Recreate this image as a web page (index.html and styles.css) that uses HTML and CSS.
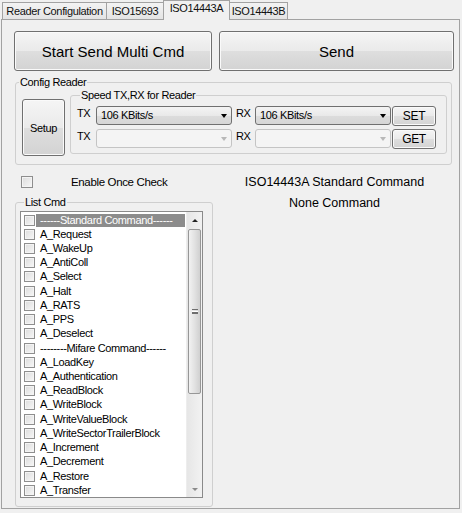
FILE: index.html
```html
<!DOCTYPE html>
<html lang="en">

<head>
    <meta charset="UTF-8">
    <title>ISO14443A</title>
    <link rel="stylesheet" href="styles.css">
</head>

<body>
    <div class="tabs">
        <div class="tab t1">Reader Configulation</div>
        <div class="tab t2">ISO15693</div>
        <div class="tab t3 active">ISO14443A</div>
        <div class="tab t4">ISO14443B</div>
    </div>
    <div class="page">
        <div class="top-btns">
            <button class="btn big start">Start Send Multi Cmd</button>
            <button class="btn big send">Send</button>
        </div>
        <fieldset class="group config">
            <legend>Config Reader</legend>
            <div class="config-row">
                <button class="btn setup">Setup</button>
                <fieldset class="group speed">
                    <legend>Speed TX,RX for Reader</legend>
                    <div class="speed-row">
                        <span class="lbl">TX</span>
                        <div class="combo">106 KBits/s<span class="arrow"></span></div>
                        <span class="lbl rx">RX</span>
                        <div class="combo">106 KBits/s<span class="arrow"></span></div>
                        <button class="btn small">SET</button>
                    </div>
                    <div class="speed-row">
                        <span class="lbl">TX</span>
                        <div class="combo disabled"><span class="arrow"></span></div>
                        <span class="lbl rx">RX</span>
                        <div class="combo disabled"><span class="arrow"></span></div>
                        <button class="btn small">GET</button>
                    </div>
                </fieldset>
            </div>
        </fieldset>
        <div class="lower">
            <div class="left-col">
                <div class="check-row">
                    <span class="chk"></span>
                    <span class="check-text">Enable Once Check</span>
                </div>
                <fieldset class="group listgrp">
                    <legend>List Cmd</legend>
                    <div class="listbox">
                        <div class="items">
                            <div class="item selected"><span class="chk"></span><span class="txt">------Standard Command------</span></div>
                            <div class="item"><span class="chk"></span><span class="txt">A_Request</span></div>
                            <div class="item"><span class="chk"></span><span class="txt">A_WakeUp</span></div>
                            <div class="item"><span class="chk"></span><span class="txt">A_AntiColl</span></div>
                            <div class="item"><span class="chk"></span><span class="txt">A_Select</span></div>
                            <div class="item"><span class="chk"></span><span class="txt">A_Halt</span></div>
                            <div class="item"><span class="chk"></span><span class="txt">A_RATS</span></div>
                            <div class="item"><span class="chk"></span><span class="txt">A_PPS</span></div>
                            <div class="item"><span class="chk"></span><span class="txt">A_Deselect</span></div>
                            <div class="item"><span class="chk"></span><span class="txt">--------Mifare Command------</span></div>
                            <div class="item"><span class="chk"></span><span class="txt">A_LoadKey</span></div>
                            <div class="item"><span class="chk"></span><span class="txt">A_Authentication</span></div>
                            <div class="item"><span class="chk"></span><span class="txt">A_ReadBlock</span></div>
                            <div class="item"><span class="chk"></span><span class="txt">A_WriteBlock</span></div>
                            <div class="item"><span class="chk"></span><span class="txt">A_WriteValueBlock</span></div>
                            <div class="item"><span class="chk"></span><span class="txt">A_WriteSectorTrailerBlock</span></div>
                            <div class="item"><span class="chk"></span><span class="txt">A_Increment</span></div>
                            <div class="item"><span class="chk"></span><span class="txt">A_Decrement</span></div>
                            <div class="item"><span class="chk"></span><span class="txt">A_Restore</span></div>
                            <div class="item"><span class="chk"></span><span class="txt">A_Transfer</span></div>
                        </div>
                        <div class="vscroll">
                            <div class="sb-btn"><span class="up"></span></div>
                            <div class="thumb"><span class="grip"></span></div>
                            <div class="track"></div>
                            <div class="sb-btn"><span class="down"></span></div>
                        </div>
                    </div>
                </fieldset>
            </div>
            <div class="right-col">
                <div class="std-title">ISO14443A Standard Command</div>
                <div class="std-sub">None Command</div>
            </div>
        </div>
    </div>
</body>

</html>
```

FILE: styles.css
```css
* {
    padding: 0;
    margin: 0;
    box-sizing: border-box;
}

body {
    background: #f0f0f0;
    font-family: "Liberation Sans", Arial, sans-serif;
    font-size: 11px;
    letter-spacing: -0.35px;
    color: #000;
}

/* tab strip */
.tabs {
    display: flex;
    align-items: flex-end;
    height: 19px;
    padding-left: 2px;
}

.tab {
    height: 17px;
    margin-right: -1px;
    border: 1px solid #a2a2a2;
    border-bottom: none;
    background: linear-gradient(#f3f3f3, #e4e4e4);
    text-align: center;
    line-height: 16px;
    color: #111;
}

.t1 { width: 105px; }
.t2 { width: 58px; }
.t3 { width: 67px; }
.t4 { width: 59px; }

.tab.active {
    position: relative;
    height: 20px;
    margin-bottom: -1px;
    background: #f0f0f0;
    line-height: 14px;
}

.page {
    width: 459px;
    height: 490px;
    margin-left: 1px;
    border: 1px solid #a2a2a2;
}

/* buttons */
.btn {
    font-family: inherit;
    font-size: 11px;
    letter-spacing: inherit;
    color: #000;
    border: 1px solid #707070;
    border-radius: 3px;
    background: linear-gradient(#f5f5f5, #eaeaea 50%, #dedede 51%, #d3d3d3);
    box-shadow: inset 0 0 0 1px #fafafa;
    cursor: pointer;
}

.top-btns {
    display: flex;
    gap: 7px;
    padding: 11px 0 0 12px;
}

.btn.big {
    height: 40px;
    font-size: 15px;
    letter-spacing: 0;
}

.start { width: 198px; }
.send { width: 235px; }

/* group boxes */
.group {
    border: 1px solid #cfcfcf;
    border-radius: 3px;
    min-width: 0;
}

.group legend {
    line-height: 13px;
    padding: 0 1px;
    margin-left: 3px;
}

.config {
    width: 437px;
    margin: 5px 0 0 13px;
    padding: 0 0 8px 0;
}

.config-row {
    display: flex;
    align-items: flex-start;
}

.btn.setup {
    width: 43px;
    height: 57px;
    margin: 10px 0 0 6px;
}

.speed {
    width: 377px;
    margin-left: 5px;
    padding: 4px 0 5px 6px;
}

.speed-row {
    display: flex;
    align-items: center;
    height: 19px;
}

.speed-row + .speed-row {
    margin-top: 4px;
}

.lbl {
    width: 19px;
    align-self: flex-start;
    line-height: 14px;
}

.lbl.rx {
    margin-left: 4px;
}

.combo {
    position: relative;
    width: 136px;
    height: 19px;
    border: 1px solid #707070;
    border-radius: 3px;
    background: linear-gradient(#f4f4f4, #e9e9e9 50%, #dcdcdc 51%, #d6d6d6);
    padding-left: 4px;
    line-height: 17px;
}

.combo.disabled {
    border-color: #c4c4c4;
    background: #f4f4f4;
}

.combo .arrow {
    position: absolute;
    right: 4px;
    top: 7px;
    border-top: 4px solid #000;
    border-left: 3.5px solid transparent;
    border-right: 3.5px solid transparent;
}

.combo.disabled .arrow {
    border-top-color: #b8b8b8;
}

.btn.small {
    width: 44px;
    height: 20px;
    margin-left: 1px;
    font-size: 12px;
}

/* lower area */
.lower {
    display: flex;
}

.left-col {
    width: 211px;
}

.check-row {
    display: flex;
    align-items: center;
    height: 12px;
    margin: 11px 0 0 19px;
}

.chk {
    width: 12px;
    height: 12px;
    border: 1px solid #8e8e8e;
    background: linear-gradient(135deg, #dcdcdc, #f7f7f7);
    box-shadow: inset 0 0 0 1px #f4f4f4;
}

.check-text {
    margin-left: 38px;
    font-size: 11.5px;
}

.listgrp {
    width: 198px;
    height: 311px;
    margin: 8px 0 0 13px;
    padding: 2px 0 0 4px;
}

.listgrp legend {
    margin-left: 4px;
}

.listbox {
    display: flex;
    width: 183px;
    height: 287px;
    border: 1px solid #8a8a8a;
    background: #fff;
}

.items {
    flex: 1;
    overflow: hidden;
    padding-top: 1px;
}

.item {
    display: flex;
    align-items: center;
    height: 14.22px;
    padding-left: 3px;
}

.item .chk {
    width: 11px;
    height: 11px;
}

.item .txt {
    flex: 1;
    height: 13px;
    line-height: 13px;
    margin: 0 1px 0 1px;
    padding-left: 4px;
    white-space: nowrap;
}

.item.selected .txt {
    background: #8c8c8c;
    color: #fff;
}

/* scrollbar */
.vscroll {
    display: flex;
    flex-direction: column;
    width: 16px;
    background: linear-gradient(90deg, #e6e6e6, #f2f2f2);
    border-left: 1px solid #ededed;
}

.sb-btn {
    height: 16px;
    display: flex;
    align-items: center;
    justify-content: center;
}

.sb-btn .up {
    border-bottom: 3px solid #222;
    border-left: 3px solid transparent;
    border-right: 3px solid transparent;
}

.sb-btn .down {
    border-top: 3px solid #8a8a8a;
    border-left: 3px solid transparent;
    border-right: 3px solid transparent;
}

.thumb {
    display: flex;
    align-items: center;
    justify-content: center;
    height: 165px;
    margin: 1px 1px 0 1px;
    border: 1px solid #979797;
    border-radius: 2px;
    background: linear-gradient(90deg, #f2f2f2, #e2e2e2 50%, #d0d0d0);
}

.grip {
    width: 6px;
    height: 5px;
    border-top: 1px solid #6e6e6e;
    border-bottom: 1px solid #6e6e6e;
    background: linear-gradient(#fff 0, #fff 1px, #6e6e6e 1px, #6e6e6e 2px, #fff 2px);
    background-position: 0 1px;
    background-repeat: no-repeat;
}

.track {
    flex: 1;
}

.right-col {
    flex: 1;
    padding-right: 3px;
    text-align: center;
    letter-spacing: 0;
}

.std-title {
    margin-top: 10px;
    font-size: 12.5px;
    line-height: 15px;
}

.std-sub {
    margin-top: 6px;
    font-size: 12.5px;
    line-height: 15px;
}
```
